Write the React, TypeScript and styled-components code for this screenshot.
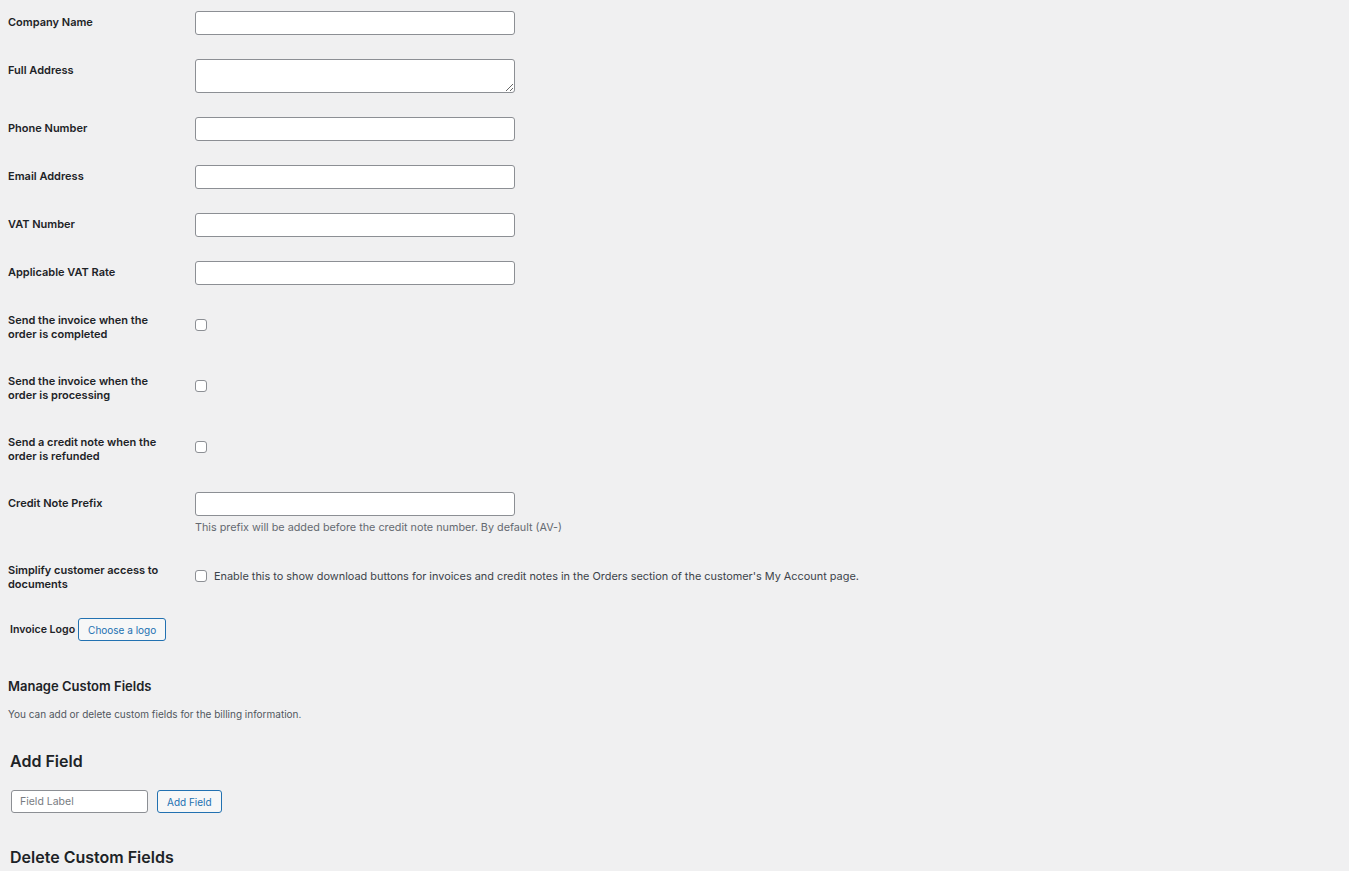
import React from "react";
import styled, { createGlobalStyle } from "styled-components";

const GlobalStyle = createGlobalStyle`
  html, body {
    margin: 0;
    padding: 0;
    background: #f0f0f1;
  }

  body {
    font-family: Inter, "Liberation Sans", Arial, sans-serif;
    color: #1d2327;
  }
`;

const Page = styled.div`
  padding: 0 8px 40px;
`;

const FormTable = styled.div`
  display: flex;
  flex-direction: column;
`;

const Row = styled.div`
  display: grid;
  grid-template-columns: 187px 1fr;
`;

const Label = styled.label<{ $narrow?: boolean }>`
  padding: 15px 10px ${(p) => (p.$narrow ? 18 : 17)}px 0;
  max-width: ${(p) => (p.$narrow ? "160px" : "none")};
  font: 600 11px/14px Inter, "Liberation Sans", Arial, sans-serif;
  color: #1d2327;
`;

const Cell = styled.div<{ $top?: number }>`
  padding: ${(p) => p.$top ?? 11}px 0 13px;
  display: flex;
  flex-direction: column;
  align-items: flex-start;
`;

const TextInput = styled.input`
  box-sizing: border-box;
  width: 320px;
  height: 24px;
  margin: 0;
  padding: 0 6px;
  background: #fff;
  border: 1px solid #8c8f94;
  border-radius: 3px;
  font: 400 11px Inter, "Liberation Sans", Arial, sans-serif;
  color: #2c3338;
  outline: none;
`;

const TextArea = styled.textarea`
  box-sizing: border-box;
  width: 320px;
  height: 34px;
  margin: 0;
  padding: 4px 6px;
  background: #fff;
  border: 1px solid #8c8f94;
  border-radius: 3px;
  font: 400 11px Inter, "Liberation Sans", Arial, sans-serif;
  outline: none;
  display: block;
`;

const Check = styled.input.attrs({ type: "checkbox" })`
  appearance: none;
  box-sizing: border-box;
  width: 12px;
  height: 12px;
  margin: 0;
  flex: none;
  background: #fff;
  border: 1px solid #8c8f94;
  border-radius: 3px;
`;

const CheckLine = styled.label`
  display: flex;
  align-items: center;
  gap: 7px;
  font: 400 10.9px/14px Inter, "Liberation Sans", Arial, sans-serif;
  color: #3c434a;
`;

const Description = styled.p`
  margin: 5px 0 0;
  font: 400 10.8px/14px Inter, "Liberation Sans", Arial, sans-serif;
  color: #646970;
`;

const LogoRow = styled.div`
  display: flex;
  align-items: center;
  gap: 3px;
  margin-top: 9px;
  padding-left: 2px;
`;

const SmallLabel = styled.span`
  font: 600 10.6px Inter, "Liberation Sans", Arial, sans-serif;
  color: #1d2327;
`;

const Button = styled.button`
  box-sizing: border-box;
  height: 23px;
  margin: 0;
  padding: 0 9px;
  background: #f6f7f7;
  color: #2271b1;
  border: 1px solid #2271b1;
  border-radius: 3px;
  font: 400 10px Inter, "Liberation Sans", Arial, sans-serif;
  cursor: pointer;
`;

const SectionTitle = styled.h2`
  margin: 36px 0 0;
  font: 600 13px/18px Inter, "Liberation Sans", Arial, sans-serif;
  color: #1d2327;
`;

const SectionNote = styled.p`
  margin: 13px 0 0;
  font: 400 10px/12px Inter, "Liberation Sans", Arial, sans-serif;
  color: #50575e;
`;

const SubTitle = styled.h3<{ $gap: number }>`
  margin: ${(p) => p.$gap}px 0 0;
  padding-left: 2px;
  font: 600 16px/20px Inter, "Liberation Sans", Arial, sans-serif;
  color: #1d2327;
`;

const AddRow = styled.div`
  display: flex;
  align-items: center;
  gap: 9px;
  margin-top: 19px;
  padding-left: 3px;
`;

const FieldInput = styled(TextInput)`
  width: 137px;
  height: 23px;
  padding: 0 8px;
  font-size: 10.5px;

  &::placeholder {
    color: #787c82;
  }
`;

const textRows = [
  "Phone Number",
  "Email Address",
  "VAT Number",
  "Applicable VAT Rate",
];

const checkRows = [
  "Send the invoice when the order is completed",
  "Send the invoice when the order is processing",
  "Send a credit note when the order is refunded",
];

const App = () => {
  return (
    <>
      <GlobalStyle />
      <Page>
        <FormTable>
          <Row>
            <Label>Company Name</Label>
            <Cell>
              <TextInput type="text" />
            </Cell>
          </Row>
          <Row>
            <Label>Full Address</Label>
            <Cell>
              <TextArea />
            </Cell>
          </Row>
          {textRows.map((label) => (
            <Row key={label}>
              <Label>{label}</Label>
              <Cell>
                <TextInput type="text" />
              </Cell>
            </Row>
          ))}
          {checkRows.map((label) => (
            <Row key={label}>
              <Label $narrow>{label}</Label>
              <Cell $top={21}>
                <Check />
              </Cell>
            </Row>
          ))}
          <Row>
            <Label>Credit Note Prefix</Label>
            <Cell>
              <TextInput type="text" />
              <Description>
                This prefix will be added before the credit note number. By default (AV-)
              </Description>
            </Cell>
          </Row>
          <Row>
            <Label $narrow>Simplify customer access to documents</Label>
            <Cell $top={21}>
              <CheckLine>
                <Check />
                Enable this to show download buttons for invoices and credit notes in the Orders section of the customer's My Account page.
              </CheckLine>
            </Cell>
          </Row>
        </FormTable>

        <LogoRow>
          <SmallLabel>Invoice Logo</SmallLabel>
          <Button>Choose a logo</Button>
        </LogoRow>

        <SectionTitle>Manage Custom Fields</SectionTitle>
        <SectionNote>You can add or delete custom fields for the billing information.</SectionNote>

        <SubTitle $gap={31}>Add Field</SubTitle>
        <AddRow>
          <FieldInput type="text" placeholder="Field Label" />
          <Button>Add Field</Button>
        </AddRow>

        <SubTitle $gap={34}>Delete Custom Fields</SubTitle>
      </Page>
    </>
  );
};

export default App;
